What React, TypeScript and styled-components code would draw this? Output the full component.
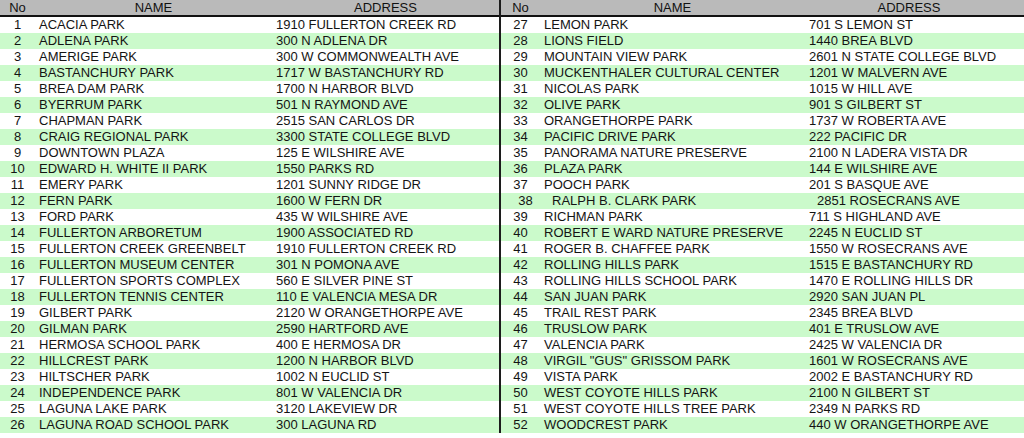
import React from "react";
import styled, { createGlobalStyle } from "styled-components";

const GlobalStyle = createGlobalStyle`
  html, body { margin: 0; padding: 0; background: #ffffff; }
  body { font-family: "Liberation Sans", Arial, Helvetica, sans-serif; }
`;

type Park = [number, string, string, boolean?];

const LEFT: Park[] = [
  [1, "ACACIA PARK", "1910 FULLERTON CREEK RD"],
  [2, "ADLENA PARK", "300 N ADLENA DR"],
  [3, "AMERIGE PARK", "300 W COMMONWEALTH AVE"],
  [4, "BASTANCHURY PARK", "1717 W BASTANCHURY RD"],
  [5, "BREA DAM PARK", "1700 N HARBOR BLVD"],
  [6, "BYERRUM PARK", "501 N RAYMOND AVE"],
  [7, "CHAPMAN PARK", "2515 SAN CARLOS DR"],
  [8, "CRAIG REGIONAL PARK", "3300 STATE COLLEGE BLVD"],
  [9, "DOWNTOWN PLAZA", "125 E WILSHIRE AVE"],
  [10, "EDWARD H. WHITE II PARK", "1550 PARKS RD"],
  [11, "EMERY PARK", "1201 SUNNY RIDGE DR"],
  [12, "FERN PARK", "1600 W FERN DR"],
  [13, "FORD PARK", "435 W WILSHIRE AVE"],
  [14, "FULLERTON ARBORETUM", "1900 ASSOCIATED RD"],
  [15, "FULLERTON CREEK GREENBELT", "1910 FULLERTON CREEK RD"],
  [16, "FULLERTON MUSEUM CENTER", "301 N POMONA AVE"],
  [17, "FULLERTON SPORTS COMPLEX", "560 E SILVER PINE ST"],
  [18, "FULLERTON TENNIS CENTER", "110 E VALENCIA MESA DR"],
  [19, "GILBERT PARK", "2120 W ORANGETHORPE AVE"],
  [20, "GILMAN PARK", "2590 HARTFORD AVE"],
  [21, "HERMOSA SCHOOL PARK", "400 E HERMOSA DR"],
  [22, "HILLCREST PARK", "1200 N HARBOR BLVD"],
  [23, "HILTSCHER PARK", "1002 N EUCLID ST"],
  [24, "INDEPENDENCE PARK", "801 W VALENCIA DR"],
  [25, "LAGUNA LAKE PARK", "3120 LAKEVIEW DR"],
  [26, "LAGUNA ROAD SCHOOL PARK", "300 LAGUNA RD"],
];

const RIGHT: Park[] = [
  [27, "LEMON PARK", "701 S LEMON ST"],
  [28, "LIONS FIELD", "1440 BREA BLVD"],
  [29, "MOUNTAIN VIEW PARK", "2601 N STATE COLLEGE BLVD"],
  [30, "MUCKENTHALER CULTURAL CENTER", "1201 W MALVERN AVE"],
  [31, "NICOLAS PARK", "1015 W HILL AVE"],
  [32, "OLIVE PARK", "901 S GILBERT ST"],
  [33, "ORANGETHORPE PARK", "1737 W ROBERTA AVE"],
  [34, "PACIFIC DRIVE PARK", "222 PACIFIC DR"],
  [35, "PANORAMA NATURE PRESERVE", "2100 N LADERA VISTA DR"],
  [36, "PLAZA PARK", "144 E WILSHIRE AVE"],
  [37, "POOCH PARK", "201 S BASQUE AVE"],
  [38, "RALPH B. CLARK PARK", "2851 ROSECRANS AVE", true],
  [39, "RICHMAN PARK", "711 S HIGHLAND AVE"],
  [40, "ROBERT E WARD NATURE PRESERVE", "2245 N EUCLID ST"],
  [41, "ROGER B. CHAFFEE PARK", "1550 W ROSECRANS AVE"],
  [42, "ROLLING HILLS PARK", "1515 E BASTANCHURY RD"],
  [43, "ROLLING HILLS SCHOOL PARK", "1470 E ROLLING HILLS DR"],
  [44, "SAN JUAN PARK", "2920 SAN JUAN PL"],
  [45, "TRAIL REST PARK", "2345 BREA BLVD"],
  [46, "TRUSLOW PARK", "401 E TRUSLOW AVE"],
  [47, "VALENCIA PARK", "2425 W VALENCIA DR"],
  [48, "VIRGIL \"GUS\" GRISSOM PARK", "1601 W ROSECRANS AVE"],
  [49, "VISTA PARK", "2002 E BASTANCHURY RD"],
  [50, "WEST COYOTE HILLS PARK", "2100 N GILBERT ST"],
  [51, "WEST COYOTE HILLS TREE PARK", "2349 N PARKS RD"],
  [52, "WOODCREST PARK", "440 W ORANGETHORPE AVE"],
];

const Page = styled.div`
  display: flex;
  width: 1024px;
  height: 438px;
  align-items: flex-start;
  background: #ffffff;
  color: #141414;
  font-size: 13px;
`;

const Table = styled.div<{ $divider?: boolean }>`
  display: flex;
  flex-direction: column;
  width: ${(p) => (p.$divider ? "501px" : "auto")};
  flex: ${(p) => (p.$divider ? "0 0 auto" : "1 1 auto")};
  box-sizing: border-box;
  border-right: ${(p) => (p.$divider ? "2px solid #1c1c1c" : "none")};
`;

const HeaderRow = styled.div<{ $cols: string }>`
  display: grid;
  grid-template-columns: ${(p) => p.$cols};
  height: 15px;
  background: #bababa;
  border-bottom: 2px solid #111111;
  align-items: center;
  line-height: 15px;
`;

const HeaderCell = styled.div`
  text-align: center;
  color: #111111;
  white-space: nowrap;
`;

const Row = styled.div<{ $cols: string; $green: boolean }>`
  display: grid;
  grid-template-columns: ${(p) => p.$cols};
  height: 16px;
  line-height: 16px;
  background: ${(p) => (p.$green ? "#cbfacb" : "#ffffff")};
  align-items: center;
`;

const NumCell = styled.div<{ $shift?: boolean }>`
  text-align: center;
  padding-left: ${(p) => (p.$shift ? "10px" : "0")};
  white-space: nowrap;
`;

const TextCell = styled.div<{ $shift?: boolean }>`
  padding-left: ${(p) => (p.$shift ? "12px" : "4px")};
  white-space: nowrap;
  overflow: hidden;
`;

function ParkTable({ rows, cols, divider }: { rows: Park[]; cols: string; divider?: boolean }) {
  return (
    <Table $divider={divider}>
      <HeaderRow $cols={cols}>
        <HeaderCell>No</HeaderCell>
        <HeaderCell>NAME</HeaderCell>
        <HeaderCell>ADDRESS</HeaderCell>
      </HeaderRow>
      {rows.map(([n, name, addr, shift], i) => (
        <Row key={n} $cols={cols} $green={i % 2 === 1}>
          <NumCell $shift={shift}>{n}</NumCell>
          <TextCell $shift={shift}>{name}</TextCell>
          <TextCell $shift={shift}>{addr}</TextCell>
        </Row>
      ))}
    </Table>
  );
}

export default function App() {
  return (
    <>
      <GlobalStyle />
      <Page>
        <ParkTable rows={LEFT} cols="35px 237px 1fr" divider />
        <ParkTable rows={RIGHT} cols="39px 265px 208px 1fr" />
      </Page>
    </>
  );
}
